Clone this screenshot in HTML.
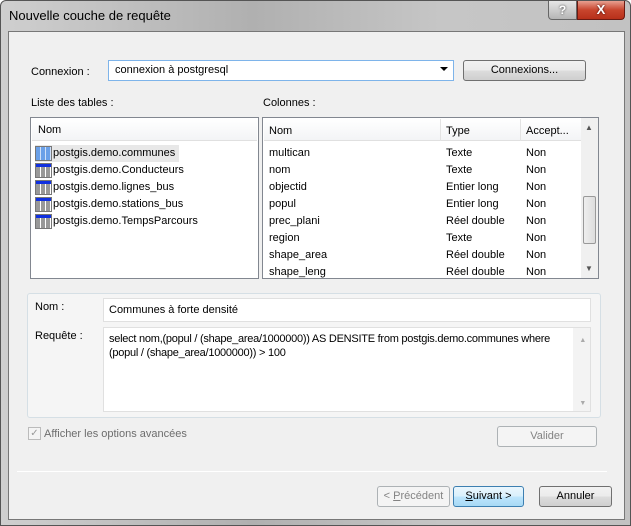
<!DOCTYPE html><html><head><style>
*{box-sizing:border-box}
body{margin:0;width:631px;height:526px;overflow:hidden;font-family:"Liberation Sans",sans-serif;font-size:11px;color:#000;background:#fff}
.win{position:absolute;left:0;top:0;width:631px;height:526px;background:linear-gradient(90deg,#cfcfcf,#b0b0b0 40%,#c6c6c6 70%,#c2c2c2);border:1px solid #555;border-radius:6px 6px 0 0}
.title{position:absolute;left:8px;top:7px;font-size:13px;color:#000}
.client{position:absolute;left:7px;top:30px;width:617px;height:489px;background:#f0f0f0;border:1px solid #777}
.a{position:absolute}
.box{position:absolute;background:#fff;border:1px solid #abadb3}
.btn{position:absolute;border:1px solid #707070;border-radius:3px;background:linear-gradient(#f2f2f2,#ebebeb 50%,#dddddd 50%,#cfcfcf);text-align:center;font-size:11px;line-height:19px}
.row{position:absolute;height:17px;line-height:17px;font-size:11px}
.ic{display:inline-block;width:17px;height:15px;vertical-align:middle;margin-right:1px;background:linear-gradient(#1030e0 0 3px,transparent 3px),repeating-linear-gradient(90deg,#999 0 4px,#fff 4px 5px);border:1px solid #777}
</style></head><body>
<div class="win">
<div class="title">Nouvelle couche de requête</div>
<div class="a" style="left:547px;top:0;width:29px;height:19px;border:1px solid #666;border-top:none;border-radius:0 0 0 4px;background:linear-gradient(#e6e6e6,#b5b5b5);text-align:center;font-weight:bold;color:#fff;font-size:12px;line-height:18px;text-shadow:0 0 2px #333">?</div>
<div class="a" style="left:576px;top:0;width:48px;height:19px;border:1px solid #6b1a12;border-top:none;border-radius:0 0 4px 0;background:linear-gradient(#e8a090,#c8452d 50%,#b7301a);text-align:center;font-weight:bold;color:#fff;font-size:13px;line-height:18px;text-shadow:0 0 2px #300">X</div>
<div class="client"></div>
</div>
<div class="a" style="left:31px;top:66px">Connexion :</div>
<div class="box" style="left:108px;top:60px;width:346px;height:21px;border-color:#7eb4ea;padding:3px 6px">connexion à postgresql</div>
<div class="a" style="left:440px;top:67px;border:4px solid transparent;border-top:4px solid #000;border-bottom:0;width:0;height:0"></div>
<div class="btn" style="left:463px;top:60px;width:123px;height:21px">Connexions...</div>
<div class="a" style="left:31px;top:97px">Liste des tables :</div>
<div class="a" style="left:263px;top:97px">Colonnes :</div>
<div class="box" style="left:30px;top:117px;width:229px;height:162px;border-color:#828790">
<div class="a" style="left:1px;top:1px;width:225px;height:22px;background:linear-gradient(#fff,#f3f4f6);border-bottom:1px solid #e0e0e0;padding:5px 6px">Nom</div>
<div class="row" style="left:4px;top:27px;width:144px;background:#e8e8e8"><span class="ic" style="background:repeating-linear-gradient(90deg,#6aa0e8 0 4px,#cfe0f8 4px 5px)"></span>postgis.demo.communes</div>
<div class="row" style="left:4px;top:44px"><span class="ic"></span>postgis.demo.Conducteurs</div>
<div class="row" style="left:4px;top:61px"><span class="ic"></span>postgis.demo.lignes_bus</div>
<div class="row" style="left:4px;top:78px"><span class="ic"></span>postgis.demo.stations_bus</div>
<div class="row" style="left:4px;top:95px"><span class="ic"></span>postgis.demo.TempsParcours</div>
</div>
<div class="box" style="left:262px;top:117px;width:337px;height:162px;border-color:#828790">
<div class="a" style="left:1px;top:1px;width:317px;height:22px;background:linear-gradient(#fff,#f3f4f6);border-bottom:1px solid #e0e0e0"></div>
<div class="a" style="left:177px;top:1px;width:1px;height:22px;background:#e3e3e3"></div>
<div class="a" style="left:257px;top:1px;width:1px;height:22px;background:#e3e3e3"></div>
<div class="a" style="left:6px;top:7px">Nom</div><div class="a" style="left:183px;top:7px">Type</div><div class="a" style="left:263px;top:7px">Accept...</div>
<div class="a" style="left:318px;top:0;width:17px;height:160px;background:#f0f0f0"></div>
<div class="a" style="left:320px;top:78px;width:13px;height:48px;border:1px solid #999;border-radius:2px;background:linear-gradient(90deg,#eee,#ddd)"></div>
<div class="a" style="left:322px;top:5px;font-size:8px;color:#555">▲</div>
<div class="a" style="left:322px;top:146px;font-size:8px;color:#555">▼</div>
<div style="position:absolute;left:6px;top:27px;line-height:17px">multican<br>nom<br>objectid<br>popul<br>prec_plani<br>region<br>shape_area<br>shape_leng</div>
<div style="position:absolute;left:183px;top:27px;line-height:17px">Texte<br>Texte<br>Entier long<br>Entier long<br>Réel double<br>Texte<br>Réel double<br>Réel double</div>
<div style="position:absolute;left:263px;top:27px;line-height:17px">Non<br>Non<br>Non<br>Non<br>Non<br>Non<br>Non<br>Non</div>
</div>
<div class="a" style="left:27px;top:293px;width:574px;height:125px;border:1px solid #d5dfe5;border-radius:3px;background:#f5f5f5"></div>
<div class="a" style="left:35px;top:301px">Nom :</div>
<div class="a" style="left:35px;top:330px">Requête :</div>
<div class="box" style="left:103px;top:298px;width:488px;height:24px;border-color:#e0e0e0;padding:5px 5px">Communes à forte densité</div>
<div class="box" style="left:103px;top:327px;width:488px;height:85px;border-color:#e0e0e0;padding:4px 5px 0 5px;line-height:14px;letter-spacing:-0.25px">select nom,(popul / (shape_area/1000000)) AS DENSITE from postgis.demo.communes where<br>(popul / (shape_area/1000000)) &gt; 100
<div class="a" style="right:0;top:0;width:17px;height:83px;background:#f3f3f3"></div>
<div class="a" style="right:4px;top:6px;font-size:7px;color:#aaa">▲</div>
<div class="a" style="right:4px;top:69px;font-size:7px;color:#aaa">▼</div></div>
<div class="a" style="left:28px;top:427px;width:13px;height:13px;border:1px solid #bbb;background:#f4f4f4;color:#999;font-size:10px;line-height:11px;text-align:center">✓</div>
<div class="a" style="left:44px;top:428px;color:#6d6d6d">Afficher les options avancées</div>
<div class="btn" style="left:497px;top:426px;width:100px;height:21px;border-color:#adb2b5;background:#f4f4f4;color:#838383">Valider</div>
<div class="a" style="left:17px;top:471px;width:590px;height:1px;background:#a0a0a0;border-bottom:1px solid #fff"></div>
<div class="btn" style="left:377px;top:486px;width:73px;height:21px;border-color:#adb2b5;background:#f4f4f4;color:#838383">&lt; <u>P</u>récédent</div>
<div class="btn" style="left:453px;top:486px;width:71px;height:21px;border-color:#3c7fb1;background:linear-gradient(#eaf6fd,#d9f0fc 50%,#bee6fd 50%,#a7d9f5)"><u>S</u>uivant &gt;</div>
<div class="btn" style="left:539px;top:486px;width:73px;height:21px">Annuler</div>
</body></html>
